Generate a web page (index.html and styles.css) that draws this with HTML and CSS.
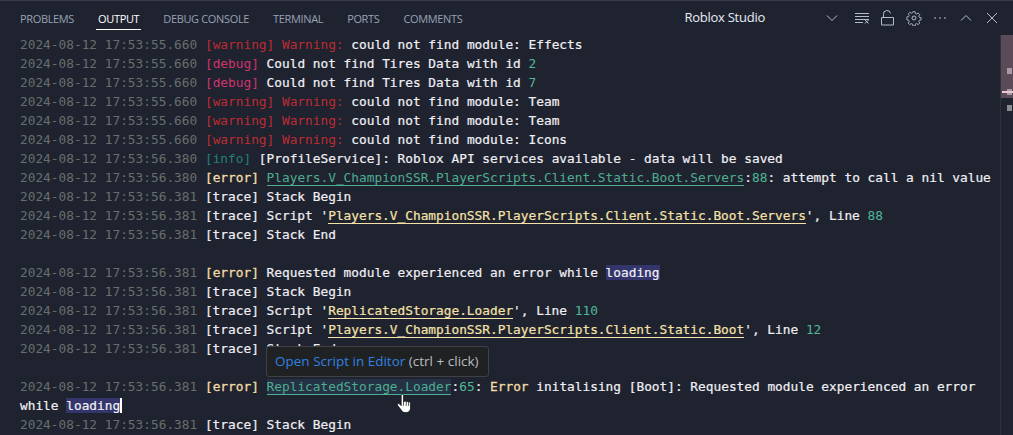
FILE: index.html
```html
<!DOCTYPE html>
<html lang="en">
<head>
<meta charset="utf-8">
<title>Output</title>
<link rel="stylesheet" href="styles.css">
</head>
<body>
<div class="panel">
  <header class="bar">
    <nav class="tabs">
      <span class="tab">PROBLEMS</span>
      <span class="tab active">OUTPUT</span>
      <span class="tab">DEBUG CONSOLE</span>
      <span class="tab">TERMINAL</span>
      <span class="tab">PORTS</span>
      <span class="tab">COMMENTS</span>
    </nav>
    <div class="actions">
      <span class="channel">Roblox Studio</span>
      <svg class="ic chev first" viewBox="0 0 16 16"><path d="M3 5.500l5 5 5-5"/></svg>
      <svg class="ic clear" viewBox="0 0 16 16"><path d="M1 3.500h14M1 6.500h14M1 9.500h14M1 12.500h8M11 10l3.500 3.500M14.500 10L11 13.500"/></svg>
      <svg class="ic lock" viewBox="0 0 16 16"><path d="M1.500 7.500h12v7.500h-12zM3.500 7.500V4.500a3.500 3.500 0 0 1 7-1"/></svg>
      <svg class="ic gear" viewBox="0 0 16 16"><circle cx="8" cy="8" r="2"/><path transform="translate(.8 .8) scale(.9)" d="M6.800 1h2.400l.4 2 1.400.6 1.700-1.100 1.700 1.700-1.100 1.700.6 1.400 2 .4v2.400l-2 .4-.6 1.400 1.100 1.700-1.700 1.700-1.700-1.100-1.400.6-.4 2H6.800l-.4-2-1.400-.6-1.700 1.100-1.700-1.700 1.100-1.700-.6-1.400-2-.4V6.800l2-.4.6-1.400-1.100-1.700 1.700-1.700 1.700 1.100 1.400-.6z"/></svg>
      <svg class="ic dots" viewBox="0 0 16 16"><path d="M2 8h2M7 8h2M12 8h2"/></svg>
      <svg class="ic chev" viewBox="0 0 16 16"><path d="M3 10.500l5-5 5 5"/></svg>
      <svg class="ic close" viewBox="0 0 16 16"><path d="M3 3l10 10M13 3L3 13"/></svg>
    </div>
  </header>
  <main class="log">
    <div class="line"><span class="ts">2024-08-12 17:53:55.660</span> <span class="warn">[warning] Warning: </span>could not find module: Effects</div>
    <div class="line"><span class="ts">2024-08-12 17:53:55.660</span> <span class="dbg">[debug]</span> Could not find Tires Data with id <span class="num">2</span></div>
    <div class="line"><span class="ts">2024-08-12 17:53:55.660</span> <span class="dbg">[debug]</span> Could not find Tires Data with id <span class="num">7</span></div>
    <div class="line"><span class="ts">2024-08-12 17:53:55.660</span> <span class="warn">[warning] Warning: </span>could not find module: Team</div>
    <div class="line"><span class="ts">2024-08-12 17:53:55.660</span> <span class="warn">[warning] Warning: </span>could not find module: Team</div>
    <div class="line"><span class="ts">2024-08-12 17:53:55.660</span> <span class="warn">[warning] Warning: </span>could not find module: Icons</div>
    <div class="line"><span class="ts">2024-08-12 17:53:56.380</span> <span class="info">[info]</span> [ProfileService]: Roblox API services available - data will be saved</div>
    <div class="line"><span class="ts">2024-08-12 17:53:56.380</span> <span class="err">[error]</span> <span class="link">Players.V_ChampionSSR.PlayerScripts.Client.Static.Boot.Servers</span>:<span class="num">88</span>: attempt to call a nil value</div>
    <div class="line"><span class="ts">2024-08-12 17:53:56.381</span> [trace] Stack Begin</div>
    <div class="line"><span class="ts">2024-08-12 17:53:56.381</span> [trace] Script '<span class="path">Players.V_ChampionSSR.PlayerScripts.Client.Static.Boot.Servers</span>', Line <span class="num">88</span></div>
    <div class="line"><span class="ts">2024-08-12 17:53:56.381</span> [trace] Stack End</div>
    <div class="line blank"></div>
    <div class="line"><span class="ts">2024-08-12 17:53:56.381</span> <span class="err">[error]</span> Requested module experienced an error while <span class="find">loading</span></div>
    <div class="line"><span class="ts">2024-08-12 17:53:56.381</span> [trace] Stack Begin</div>
    <div class="line"><span class="ts">2024-08-12 17:53:56.381</span> [trace] Script '<span class="path">ReplicatedStorage.Loader</span>', Line <span class="num">110</span></div>
    <div class="line"><span class="ts">2024-08-12 17:53:56.381</span> [trace] Script '<span class="path">Players.V_ChampionSSR.PlayerScripts.Client.Static.Boot</span>', Line <span class="num">12</span></div>
    <div class="line"><span class="ts">2024-08-12 17:53:56.381</span> [trace] Stack End</div>
    <div class="line blank"></div>
    <div class="line"><span class="ts">2024-08-12 17:53:56.381</span> <span class="err">[error]</span> <span class="link hover">ReplicatedStorage.Loader</span>:<span class="num">65</span>: <span class="err">Error</span> initalising [Boot]: Requested module experienced an error while <span class="find caret">loading</span></div>
    <div class="line"><span class="ts">2024-08-12 17:53:56.381</span> [trace] Stack Begin</div>
    <div class="tooltip"><span class="tip-link">Open Script in Editor</span> (ctrl + click)</div>
    <svg class="hand" viewBox="0 0 18 24"><path d="M5.500 2.500c0-1.600 2.500-1.600 2.500 0v7l.5-.2c0-1.400 2.300-1.400 2.400 0l.1.300c.2-1.100 2.200-1.100 2.300.3.300-.8 2-.7 2 .8v5.300c0 2.500-1.700 4.500-4.500 4.500H9.500c-2 0-3-1-4-2.600L1.800 13c-.9-1.400.9-2.700 2-1.500l1.700 1.700z"/><path class="cut" d="M8 9.500v4M10.900 9.500v4M13.300 10v3.500"/></svg>
  </main>
  <aside class="ruler"><div class="slider"></div><i class="mark m1"></i><i class="mark m2"></i><i class="tick"></i><i class="mark m3"></i></aside>
</div>
</body>
</html>
```
FILE: styles.css
```css
html, body { margin: 0; padding: 0; }
body { width: 1013px; height: 435px; overflow: hidden; background: #1f2330; }
.panel { position: relative; width: 1013px; height: 435px; box-sizing: border-box; border-top: 1px solid #3a3d47; background: #1f2330; overflow: hidden; }
.bar { display: flex; justify-content: space-between; height: 34px; box-sizing: border-box; }
.tabs { display: flex; padding-left: 18px; gap: 20px; font: 11px/1 "Open Sans", sans-serif; color: #97a1b4; }
.tab { display: block; height: 29px; box-sizing: border-box; padding: 12px 2px 0; letter-spacing: -0.35px; white-space: nowrap; }
.tab.active { color: #fff; border-bottom: 1px solid #fff; }
.actions { display: flex; align-items: center; height: 34px; padding-right: 13px; }
.channel { font: 13px/1 "Open Sans", sans-serif; color: #e8ecf4; margin-right: 59px; padding-bottom: 1px; letter-spacing: -0.25px; }
.ic { width: 16px; height: 16px; fill: none; stroke: #b4bccb; stroke-width: 1; margin-left: 10px; }
.ic.first { margin-left: 0; margin-right: 4px; }
.log { position: relative; box-sizing: border-box; width: 1000px; padding: 0 0 0 20px; font: 12.8px/19px "DejaVu Sans Mono", monospace; color: #f1eff4; -webkit-text-stroke: 0.2px currentColor; }
.line { min-height: 19px; white-space: pre-wrap; }
.ts { color: #686e6c; -webkit-text-stroke: 0; }
.warn { color: #bd2c33; -webkit-text-stroke: 0; }
.dbg { color: #cf346b; -webkit-text-stroke: 0; }
.info { color: #1f8176; -webkit-text-stroke: 0; }
.err { color: #f2dca6; -webkit-text-stroke: 0.3px currentColor; }
.num { color: #4fb899; -webkit-text-stroke: 0; }
.link { color: #4ead8f; border-bottom: 1px solid #4ead8f; -webkit-text-stroke: 0; }
.link.hover { background: #253246; }
.path { color: #f6e2a8; border-bottom: 1px solid #f6e2a8; }
.find { background: #33356b; }
.caret { box-shadow: 2px 0 0 #fff; }
.tooltip { position: absolute; left: 266px; top: 311px; width: 223px; height: 31px; box-sizing: border-box; padding: 0 8px; border: 1px solid #3f4144; border-radius: 3px; background: #202123; font: 13.5px/29px "Open Sans", sans-serif; color: #b9bcc2; white-space: nowrap; -webkit-text-stroke: 0; }
.tip-link { color: #2f82e0; }
.hand { position: absolute; left: 396px; top: 357px; width: 17px; height: 25px; }
.hand path { fill: #fff; stroke: #111; stroke-width: .8; }
.hand .cut { fill: none; stroke-width: .7; }
.ruler { position: absolute; right: 0; top: 34px; width: 13px; height: 401px; box-sizing: border-box; border-left: 1px solid #2f323d; }
.slider { height: 63px; background: #5b4b59; }
.mark { position: absolute; width: 5px; height: 6px; background: #9c8f98; }
.m1 { left: 6px; top: 33px; background: #a89aa0; }
.m2 { left: 6px; top: 54px; background: #a89aa0; }
.m3 { left: 6px; top: 70px; background: #8b8c92; }
.tick { position: absolute; left: 1px; top: 56px; width: 12px; height: 2px; background: #e8c8d4; }
```
